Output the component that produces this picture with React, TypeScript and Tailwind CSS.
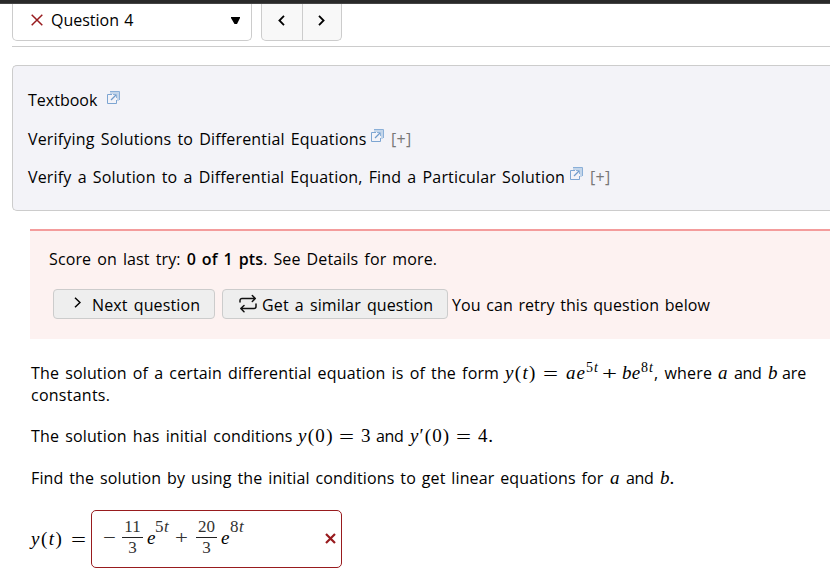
import { FC, ReactNode } from "react"

type TextProps = { children: ReactNode; className?: string }

const Math: FC<TextProps> = ({ children, className = "" }) => (
    <span className={`shrink-0 font-['Liberation_Serif',serif] text-[19px] tracking-normal whitespace-nowrap [word-spacing:0] ${className}`}>{children}</span>
)

// wide relation / operator sign
const Sign: FC<TextProps> = ({ children, className = "" }) => (
    <Math className={className}><span className="inline-block origin-left translate-y-px scale-x-[1.4]">{children}</span></Math>
)

const ExternalIcon: FC<{ className?: string }> = ({ className = "" }) => (
    <svg className={`shrink-0 ${className}`} width="13" height="13" viewBox="0 0 13 13" fill="none">
        <path d="M3 .5h9.5V9" stroke="#8aafd8" />
        <path d="M3 1h9v9h-2V3H3z" fill="#c3d5ea" />
        <path d="M5 3.5H.5v9h9V9" stroke="#7da5d2" />
        <path d="M4 9l5-5" stroke="#6f9bcb" strokeWidth="1.2" />
        <path d="M6 3.5h3.5V7" stroke="#8fb2d9" />
    </svg>
)

const Fraction: FC<{ top: string; bottom: string }> = ({ top, bottom }) => (
    <span className="flex w-[21px] shrink-0 flex-col items-center font-['Liberation_Serif',serif] text-[17px] tracking-normal text-[#333]">
        <span className="h-[19px] leading-[17px]">{top}</span>
        <span className="h-px w-full bg-[#222]" />
        <span className="h-[22px] leading-[19px]">{bottom}</span>
    </span>
)

const App: FC = () => {
    return (
        <div className="h-[581px] w-[830px] overflow-hidden bg-white font-['Open_Sans',sans-serif] text-base tracking-[0.12px] text-black [word-spacing:1.8px]">
            <div className="h-1 border-b border-[#444] bg-[#292929]"></div>
            <div className="ml-3 flex h-[43px] border-b border-[#ccc]">
                <div className="flex h-[37px] w-60 items-center rounded-b-[5px] border border-t-0 border-[#ccc] pb-1">
                    <svg className="ml-[18px]" width="12" height="12" viewBox="0 0 12 12" stroke="#981b1e" strokeWidth="1.5">
                        <path d="M.7.7l10.6 10.6M11.3.7.7 11.3" />
                    </svg>
                    <span className="ml-2 w-[180px] tracking-normal whitespace-nowrap [word-spacing:1px]">Question 4</span>
                    <svg width="9" height="7" viewBox="0 0 9 7"><path d="M0 0h9v1L6 7H3.5L0 1z" /></svg>
                </div>
                <div className="ml-[9px] flex h-[37px] w-[81px] rounded-b-[5px] border border-t-0 border-[#ccc] bg-[#f8f8f8]">
                    <div className="flex w-[41px] items-center border-r border-[#ccc] pb-1 pl-4">
                        <svg width="7" height="11" viewBox="0 0 7 11" fill="none" stroke="black" strokeWidth="1.8"><path d="M6 .8 1.4 5.5 6 10.2" /></svg>
                    </div>
                    <div className="flex w-[38px] items-center pb-1 pl-[15px]">
                        <svg width="7" height="11" viewBox="0 0 7 11" fill="none" stroke="black" strokeWidth="1.8"><path d="m1 .8 4.6 4.7L1 10.2" /></svg>
                    </div>
                </div>
            </div>

            <div className="mt-[18px] ml-3 h-[146px] rounded-l-[5px] border border-r-0 border-[#ccc] bg-[#f3f3f8] pt-[22px] pl-[15px] whitespace-nowrap">
                <div className="flex h-[39px] leading-6">
                    <span className="w-[79px] tracking-normal">Textbook</span>
                    <ExternalIcon className="mt-[3px]" />
                </div>
                <div className="flex h-[38px] leading-6">
                    <span className="w-[343px] tracking-[0.17px]">Verifying Solutions to Differential Equations</span>
                    <ExternalIcon className="mt-[2px]" />
                    <span className="ml-[7px] tracking-[0.3px] text-[#777]">[+]</span>
                </div>
                <div className="flex leading-6">
                    <span className="w-[542px] tracking-[0.17px]">Verify a Solution to a Differential Equation, Find a Particular Solution</span>
                    <ExternalIcon className="mt-[2px]" />
                    <span className="ml-[7px] tracking-[0.3px] text-[#777]">[+]</span>
                </div>
            </div>

            <div className="mt-[18px] ml-[30px] h-[110px] border-t-2 border-[#f49c9c] bg-[#fdf2f1] pt-4 whitespace-nowrap">
                <p className="pl-[19px] leading-6 tracking-[0.13px] [word-spacing:1.7px]">Score on last try: <span className="font-semibold tracking-[0.1px]">0 of 1 pts</span>. See Details for more.</p>
                <div className="mt-[18px] ml-[23px] flex h-[30px] items-center">
                    <button className="flex h-[30px] w-[162px] items-center rounded-[4px] border border-[#ccc] bg-[#eee] pt-px">
                        <svg className="mb-1 ml-[20px]" width="7" height="11" viewBox="0 0 7 11" fill="none" stroke="black" strokeWidth="1.5"><path d="m1 .7 5 4.8-5 4.8" /></svg>
                        <span className="ml-[11px] tracking-[0.13px] [word-spacing:1.8px]">Next question</span>
                    </button>
                    <button className="ml-[7px] flex h-[30px] w-[226px] items-center rounded-[4px] border border-[#ccc] bg-[#eee] pt-px">
                        <svg className="mb-[3px] ml-4" width="18" height="19" viewBox="0 0 18 19" fill="none" stroke="#111" strokeWidth="1.5" strokeLinecap="round" strokeLinejoin="round">
                            <path d="M1 8V6.5a2 2 0 0 1 2-2h13M13.3 1.5l3 3-3 3M17 10v2.5a2 2 0 0 1-2 2H2M5 11.5l-3.2 3L5 17.7" />
                        </svg>
                        <span className="ml-[5px] tracking-[0.13px] [word-spacing:1.8px]">Get a similar question</span>
                    </button>
                    <span className="ml-1 pt-px tracking-[0.05px] [word-spacing:1.5px]">You can retry this question below</span>
                </div>
            </div>

            <div className="ml-[31px] whitespace-nowrap">
                <div className="mt-[22px] flex h-6 items-baseline leading-6">
                    <span className="w-[474px] shrink-0 tracking-[0.15px]">The solution of a certain differential equation is of the form</span>
                    <Math className="w-[38px] tracking-[1.3px]!"><i>y</i>(<i>t</i>)</Math>
                    <Sign className="w-[23px]">=</Sign>
                    <Math className="w-5 tracking-[0.9px]!"><i>ae</i></Math>
                    <Math className="w-[16px] -translate-y-[7px] text-[14px]! tracking-[0.9px]!">5<i>t</i></Math>
                    <Sign className="w-5">+</Sign>
                    <Math className="w-[19px] tracking-[0.3px]!"><i>be</i></Math>
                    <Math className="w-[13px] -translate-y-[7px] text-[14px]! tracking-[0.9px]!">8<i>t</i></Math>
                    <span className="w-[64px] shrink-0 tracking-[0.2px]">, where</span>
                    <Math className="w-4"><i>a</i></Math>
                    <span className="w-[34px] shrink-0 tracking-[-0.3px]">and</span>
                    <Math className="w-[14px]"><i>b</i></Math>
                    <span className="tracking-[-0.1px]">are</span>
                </div>
                <p className="-mt-0.5 h-6 leading-6 tracking-[0.25px]">constants.</p>
                <div className="mt-[17px] flex h-6 items-baseline leading-6">
                    <span className="w-[267px] shrink-0 tracking-[0.15px]">The solution has initial conditions</span>
                    <Math className="w-[41px] tracking-[1.3px]!"><i>y</i>(0)</Math>
                    <Sign className="w-[22px]">=</Sign>
                    <Math className="w-[15px]">3</Math>
                    <span className="w-[34px] shrink-0 tracking-[-0.3px]">and</span>
                    <Math className="w-[46px] tracking-[1.1px]!"><i>y</i>′(0)</Math>
                    <Sign className="w-[22px]">=</Sign>
                    <Math className="tracking-[0.7px]!">4.</Math>
                </div>
                <div className="mt-[18px] flex h-6 items-baseline leading-6">
                    <span className="w-[579px] shrink-0 [word-spacing:1.6px]">Find the solution by using the initial conditions to get linear equations for</span>
                    <Math className="w-4"><i>a</i></Math>
                    <span className="w-[34px] shrink-0 tracking-[-0.3px]">and</span>
                    <Math><i>b</i>.</Math>
                </div>
                <div className="mt-5 flex h-[58px] items-center">
                    <Math className="w-10 tracking-[1.5px]!"><i>y</i>(<i>t</i>)</Math>
                    <Sign className="w-5">=</Sign>
                    <div className="flex h-[58px] w-[251px] items-center rounded-[5px] border border-[#981b1e] pl-[11px]">
                        <Math className="w-[19px] text-[#333]"><span className="inline-block origin-left -translate-y-px scale-x-[1.2]">−</span></Math>
                        <Fraction top="11" bottom="3" />
                        <Math className="ml-1 w-2 -translate-y-px"><i>e</i></Math>
                        <Math className="w-[20px] -translate-y-[12px] text-[17px]! tracking-[0.4px]! text-[#333]">5<i>t</i></Math>
                        <Math className="w-[21px] text-[#333]"><span className="inline-block origin-left -translate-y-px scale-x-[1.2]">+</span></Math>
                        <Fraction top="20" bottom="3" />
                        <Math className="ml-1 w-[9px] -translate-y-px"><i>e</i></Math>
                        <Math className="-translate-y-[12px] text-[17px]! tracking-[0.4px]! text-[#333]">8<i>t</i></Math>
                        <svg className="mr-[5px] mb-0.5 ml-auto" width="11" height="11" viewBox="0 0 11 11" stroke="#981b1e" strokeWidth="2.2"><path d="m1 1 9 9M10 1l-9 9" /></svg>
                    </div>
                </div>
            </div>
        </div>
    )
}
export default App
